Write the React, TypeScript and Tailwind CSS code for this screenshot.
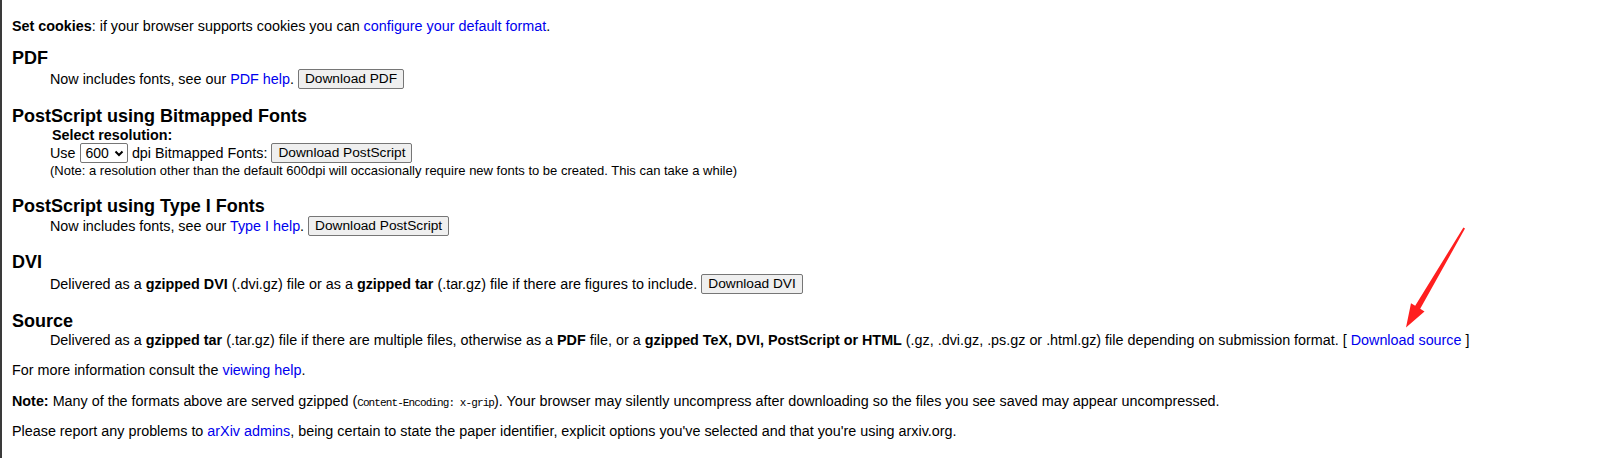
import React from 'react';

const Link: React.FC<{ children: React.ReactNode }> = ({ children }) => (
  <a href="#" className="text-[#0000ee]">{children}</a>
);

const Btn: React.FC<{ children: React.ReactNode }> = ({ children }) => (
  <button className="h-[20px] px-[6px] border border-[#767676] rounded-[2px] bg-[#efefef] text-[13.7px] leading-[16px] text-black align-middle">
    {children}
  </button>
);

const Heading: React.FC<{ children: React.ReactNode; className?: string }> = ({ children, className = '' }) => (
  <h2 className={`text-[18px] leading-[20px] font-bold ${className}`}>{children}</h2>
);

export default function App() {
  return (
    <div className="relative h-[458px] w-[1622px] overflow-hidden bg-white border-l-2 border-[#3a3a3a] pl-[10px] pt-[18px] text-black text-[14.35px] leading-[16px]" style={{ fontFamily: '"Liberation Sans", Arial, sans-serif' }}>
      <p>
        <b>Set cookies</b>: if your browser supports cookies you can <Link>configure your default format</Link>.
      </p>

      <Heading className="mt-[14px]">PDF</Heading>
      <div className="pl-[38px] mt-[1px] h-[20px] flex items-center gap-[4px]">
        <span>Now includes fonts, see our <Link>PDF help</Link>.</span>
        <Btn>Download PDF</Btn>
      </div>

      <Heading className="mt-[17px]">PostScript using Bitmapped Fonts</Heading>
      <div className="pl-[38px]">
        <div className="pl-[2px] font-bold leading-[16px] mt-[1px]">Select resolution:</div>
        <div className="h-[20px] flex items-center gap-[4px]">
          <span>Use</span>
          <span className="h-[20px] pl-[5px] pr-[3px] border border-[#767676] rounded-[2px] bg-white flex items-center gap-[5px] text-[14px]">
            600
            <svg width="10" height="10" viewBox="0 0 10 10" fill="none" stroke="#000" strokeWidth="2">
              <path d="M1.5 3.5 L5 7 L8.5 3.5" />
            </svg>
          </span>
          <span>dpi Bitmapped Fonts:</span>
          <Btn>Download PostScript</Btn>
        </div>
        <div className="text-[13px] leading-[16px]">
          (Note: a resolution other than the default 600dpi will occasionally require new fonts to be created. This can take a while)
        </div>
      </div>

      <Heading className="mt-[17px]">PostScript using Type I Fonts</Heading>
      <div className="pl-[38px] h-[20px] flex items-center gap-[4px]">
        <span>Now includes fonts, see our <Link>Type I help</Link>.</span>
        <Btn>Download PostScript</Btn>
      </div>

      <Heading className="mt-[16px]">DVI</Heading>
      <div className="pl-[38px] mt-[2px] h-[20px] flex items-center gap-[4px]">
        <span>Delivered as a <b>gzipped DVI</b> (.dvi.gz) file or as a <b>gzipped tar</b> (.tar.gz) file if there are figures to include.</span>
        <Btn>Download DVI</Btn>
      </div>

      <Heading className="mt-[17px]">Source</Heading>
      <p className="pl-[38px] mt-[1px]">
        Delivered as a <b>gzipped tar</b> (.tar.gz) file if there are multiple files, otherwise as a <b>PDF</b> file, or a <b>gzipped TeX, DVI, PostScript or HTML</b> (.gz, .dvi.gz, .ps.gz or .html.gz) file depending on submission format. [ <Link>Download source</Link> ]
      </p>

      <p className="mt-[14px]">
        For more information consult the <Link>viewing help</Link>.
      </p>

      <p className="mt-[15px]">
        <b>Note:</b> Many of the formats above are served gzipped (<code className="text-[11px] leading-[0] tracking-[-0.9px]" style={{ fontFamily: '"Liberation Mono", monospace' }}>Content-Encoding: x-grip</code>). Your browser may silently uncompress after downloading so the files you see saved may appear uncompressed.
      </p>

      <p className="mt-[14px]">
        Please report any problems to <Link>arXiv admins</Link>, being certain to state the paper identifier, explicit options you've selected and that you're using arxiv.org.
      </p>

      <svg className="absolute left-0 top-0 pointer-events-none" width="1622" height="458" viewBox="0 0 1622 458">
        <polygon
          fill="#ff1f1f"
          points="1463,228.6 1418.2,308.8 1422.5,311.4 1404,327.5 1409,303.2 1413.2,305.8 1461.4,227.6"
        />
      </svg>
    </div>
  );
}
